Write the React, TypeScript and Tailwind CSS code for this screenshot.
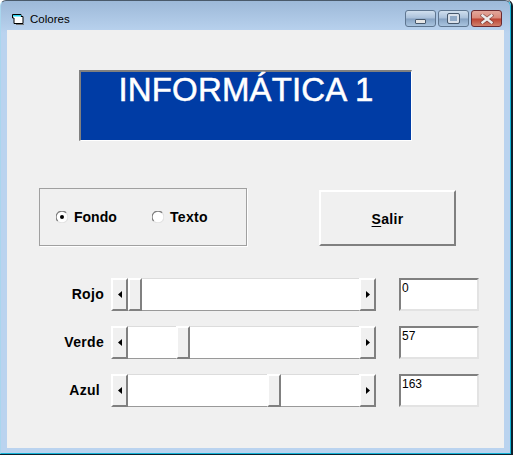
const Btn = "bg-[#f0f0f0] border-t-2 border-l-2 border-r-2 border-b-2 border-t-white border-l-white border-r-[#808080] border-b-[#808080]";
const Track = "bg-white border-t border-t-[#dcdcdc] border-b border-b-[#999999]";

function Arrow({ dir }: { dir: "left" | "right" }) {
  return (
    <div className={`${Btn} w-[17px] flex items-center justify-center shrink-0`}>
      <svg width="4" height="7" viewBox="0 0 4 7">
        <path d={dir === "left" ? "M4 0 L0 3.5 L4 7 Z" : "M0 0 L4 3.5 L0 7 Z"} fill="#000" />
      </svg>
    </div>
  );
}

function ScrollRow({ label, thumb, value, rest }: { label: string; thumb: number; value: string; rest: string }) {
  return (
    <div className="flex h-[33px] items-stretch">
      <div className={`w-[97px] flex items-center justify-end font-bold text-[14px] tracking-[0.3px] text-black ${rest}`}>{label}</div>
      <div className="ml-[7px] w-[265px] flex items-stretch">
        <Arrow dir="left" />
        <div className={Track} style={{ width: thumb }} />
        <div className={`${Btn} w-[14px] shrink-0`} />
        <div className={`flex-1 ${Track}`} />
        <Arrow dir="right" />
      </div>
      <div className="ml-[23px] w-[80px] bg-white border-t-2 border-l-2 border-t-[#808080] border-l-[#808080] border-r-2 border-b-2 border-r-[#e3e3e3] border-b-[#e3e3e3] text-[12px] leading-[12px] pl-px pt-[2px] text-black">
        {value}
      </div>
    </div>
  );
}

function Radio({ on }: { on?: boolean }) {
  return (
    <svg width="12" height="12" viewBox="0 0 12 12" className="shrink-0">
      <circle cx="6" cy="6" r="5.5" fill="#fff" />
      <path d="M1.8 10.2 A5.5 5.5 0 0 1 10.2 1.8" fill="none" stroke="#808080" strokeWidth="1.2" />
      <path d="M10.2 1.8 A5.5 5.5 0 0 1 1.8 10.2" fill="none" stroke="#e3e3e3" strokeWidth="1.2" />
      {on && <circle cx="6" cy="6" r="2" fill="#000" />}
    </svg>
  );
}

function CaptionBtn({ children, close }: { children: React.ReactNode; close?: boolean }) {
  return (
    <div
      className={`w-[31px] h-[17px] rounded-[3px] border flex items-center justify-center ${
        close
          ? "border-[#6b2a30] bg-[linear-gradient(#e3a79b_0%,#d9897a_48%,#bd4231_52%,#d0806c_100%)]"
          : "border-[#5f7690] bg-[linear-gradient(#d0dfee_0%,#a9c0da_48%,#86a2c2_52%,#a9c4df_100%)]"
      }`}
    >
      {children}
    </div>
  );
}

export default function App() {
  return (
    <div className="w-[513px] h-[455px] bg-white overflow-hidden font-['Liberation_Sans',sans-serif]">
      <div className="h-[455px] rounded-t-[6px] border-r-2 border-r-[#10202c] border-b border-b-[#10202c]">
        <div className="h-full rounded-t-[6px] border-t border-t-[#4a5a6a] border-l border-l-[#a9d6ee] border-r border-r-[#14b4d8] border-b border-b-[#14b4d8] bg-[linear-gradient(#9db9d8_0px,#bad3ef_32px,#bad3ef_100%)] flex flex-col pl-[6px] pr-[6px] pb-[5px]">
          <div className="h-[29px] flex items-start shrink-0">
            <svg width="14" height="12" viewBox="0 0 14 12" className="ml-[4px] mt-[12px]">
              <path d="M1.5 1.5 H10 V3.5 H12 V10.5 H3 V5 H1.5 Z" fill="#fff" stroke="#000" />
              <path d="M2 2 H10 V3.5 H2 Z" fill="#27d3ee" />
              <path d="M13 11.5 H5" stroke="#777" />
            </svg>
            <span className="ml-[5px] mt-[11px] text-[11.5px] leading-[15px] text-black">Colores</span>
            <div className="ml-auto mr-[2px] mt-[9px] flex gap-[2px]">
              <CaptionBtn>
                <div className="w-[11px] h-[5px] mt-[6px] bg-[#e6e6e6] border border-[#46586c] rounded-[1px]" />
              </CaptionBtn>
              <CaptionBtn>
                <div className="w-[11px] h-[9px] border-2 border-[#d8e0ea] outline outline-1 outline-[#46586c] rounded-[1px] bg-[#8fa9c6]" />
              </CaptionBtn>
              <CaptionBtn close>
                <svg width="14" height="10" viewBox="0 0 14 10">
                  <path d="M2.5 1.5 L11.5 8.5 M11.5 1.5 L2.5 8.5" stroke="#5a2a2a" strokeWidth="4" strokeLinecap="square" opacity="0.55" />
                  <path d="M2.5 1.5 L11.5 8.5 M11.5 1.5 L2.5 8.5" stroke="#ececec" strokeWidth="2.4" strokeLinecap="square" />
                </svg>
              </CaptionBtn>
            </div>
          </div>

          <div className="flex-1 bg-[#f0f0f0] flex flex-col">
            <div className="ml-[72px] mt-[40px] w-[333px] h-[71px] bg-[#003ca5] border-t-2 border-l-2 border-t-[#808080] border-l-[#808080] border-r border-b border-r-white border-b-white text-center text-white text-[33px] tracking-[0.15px] leading-[34px] pt-[1px] [-webkit-text-stroke:0.5px_white]">
              INFORMÁTICA 1
            </div>

            <div className="flex mt-[47px] h-[58px]">
              <div className="ml-[32px] w-[208px] border border-[#a0a0a0] shadow-[1px_1px_0_#fff] flex items-center font-bold text-[14px] text-black">
                <div className="ml-[16px] flex items-center gap-[6px] w-[96px]">
                  <Radio on />
                  <span>Fondo</span>
                </div>
                <div className="flex items-center gap-[6px]">
                  <Radio />
                  <span className="tracking-[0.3px]">Texto</span>
                </div>
              </div>
              <div className={`${Btn} ml-[72px] mt-[2px] w-[137px] h-[56px] flex items-center justify-center pt-[2px] font-bold text-[14px] tracking-[0.3px] text-black`}>
                <span>
                  <span className="underline underline-offset-2">S</span>alir
                </span>
              </div>
            </div>

            <div className="mt-[32px] flex flex-col gap-[15px]">
              <ScrollRow label="Rojo" thumb={0} value="0" rest="" />
              <ScrollRow label="Verde" thumb={48} value="57" rest="" />
              <ScrollRow label="Azul" thumb={139} value="163" rest="pr-[4px]" />
            </div>
          </div>
        </div>
      </div>
    </div>
  );
}
